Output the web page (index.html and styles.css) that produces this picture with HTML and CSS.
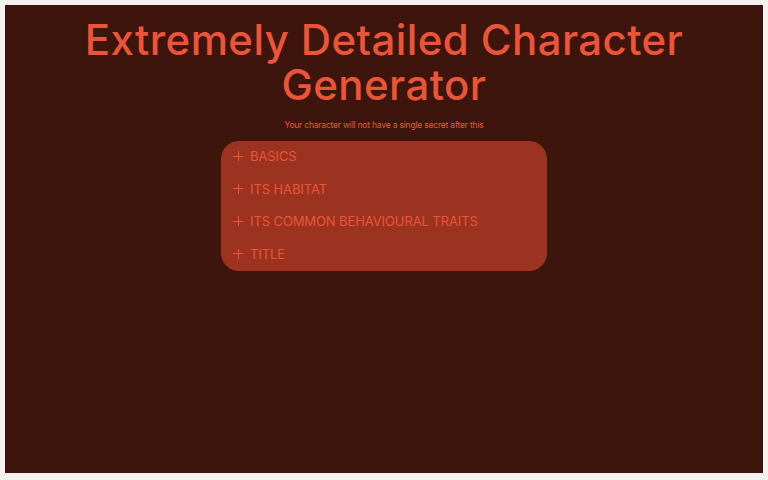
FILE: index.html
```html
<!DOCTYPE html>
<html lang="en">
<head>
<meta charset="utf-8">
<title>Extremely Detailed Character Generator</title>
<link rel="stylesheet" href="styles.css">
</head>
<body>
<main class="page">
  <h1 class="title">Extremely Detailed Character Generator</h1>
  <p class="subtitle">Your character will not have a single secret after this</p>
  <section class="accordion">
    <div class="item"><span class="plus"></span><span class="label">BASICS</span></div>
    <div class="item"><span class="plus"></span><span class="label">ITS HABITAT</span></div>
    <div class="item"><span class="plus"></span><span class="label">ITS COMMON BEHAVIOURAL TRAITS</span></div>
    <div class="item"><span class="plus"></span><span class="label">TITLE</span></div>
  </section>
</main>
</body>
</html>
```
FILE: styles.css
```css
html, body {
  margin: 0;
  padding: 0;
}

body {
  background: #f4f2f1;
  padding: 5px 5px 7px 5px;
  font-family: Inter, "Liberation Sans", Arial, sans-serif;
}

.page {
  background: #3e150d;
  height: 468px;
  display: flex;
  flex-direction: column;
  align-items: center;
  color: #e9553a;
}

.title {
  margin: 12px 0 0;
  font-size: 42px;
  font-weight: 500;
  line-height: 45px;
  text-align: center;
  width: 680px;
  letter-spacing: 0.4px;
}

.subtitle {
  margin: 12px 0 0;
  font-size: 8.5px;
  line-height: 12px;
  letter-spacing: -0.2px;
}

.accordion {
  margin-top: 10px;
  width: 326px;
  height: 130px;
  box-sizing: border-box;
  background: #9c3320;
  border-radius: 18px;
  padding: 0 12px;
  display: flex;
  flex-direction: column;
}

.item {
  height: 32.5px;
  flex: none;
  display: flex;
  align-items: center;
  gap: 7px;
  font-size: 13px;
  letter-spacing: -0.1px;
  margin-top: -1px;
  margin-bottom: 1px;
}

.plus {
  position: relative;
  width: 10px;
  height: 10px;
  flex: none;
}

.plus::before,
.plus::after {
  content: "";
  position: absolute;
  background: #e9553a;
}

.plus::before {
  left: 0;
  top: 4.5px;
  width: 10px;
  height: 1px;
}

.plus::after {
  left: 4.5px;
  top: 0;
  width: 1px;
  height: 10px;
}
```
